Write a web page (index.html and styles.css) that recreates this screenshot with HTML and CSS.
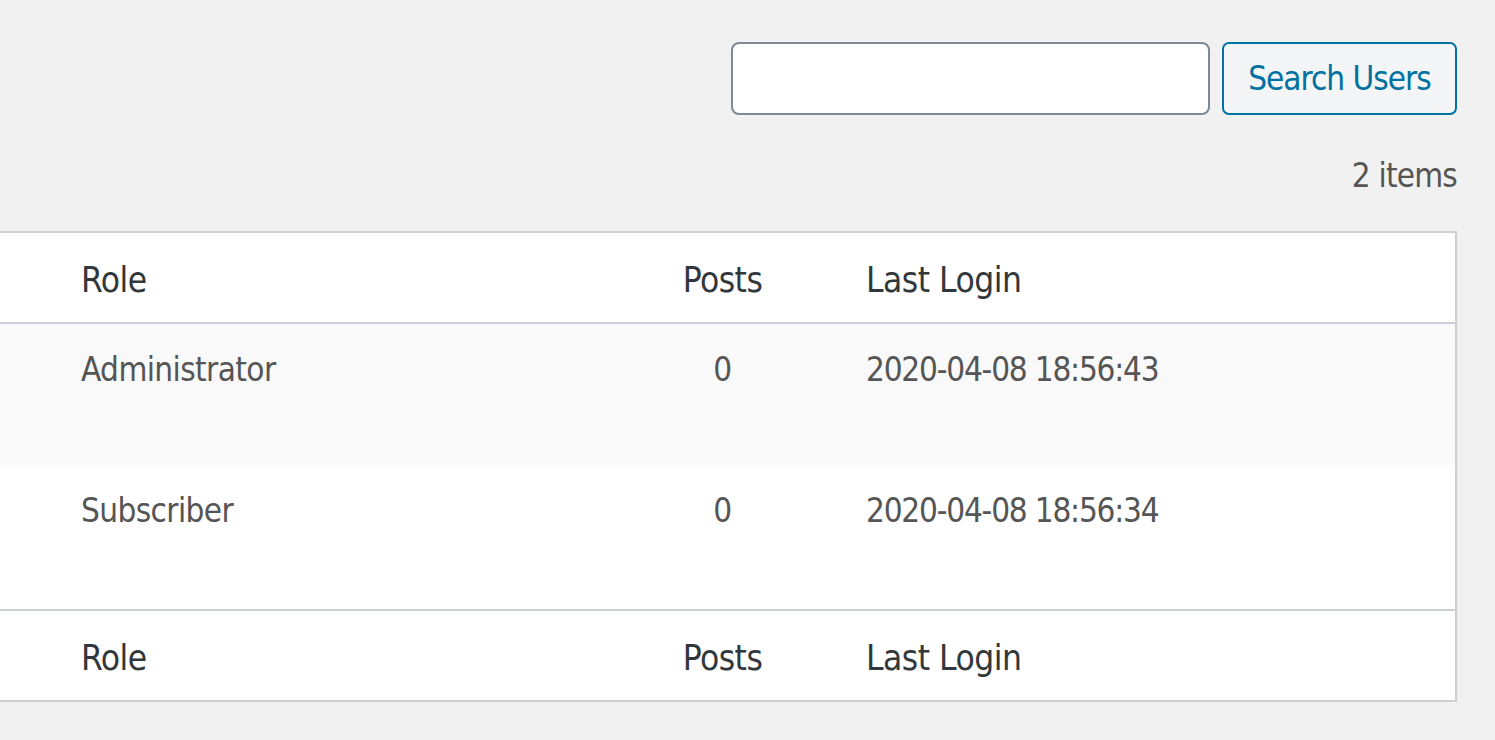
FILE: index.html
```html
<!DOCTYPE html>
<html lang="en">
<head>
<meta charset="utf-8">
<title>Users</title>
<link rel="stylesheet" href="styles.css">
</head>
<body>
<div class="wrap">
  <form class="search-box">
    <input class="search-input" type="search" aria-label="Search Users">
    <button class="button" type="button">Search Users</button>
  </form>
  <div class="tablenav">
    <span class="displaying-num">2 items</span>
  </div>
  <table class="users">
    <thead>
      <tr>
        <th class="col-role">Role</th>
        <th class="col-posts">Posts</th>
        <th class="col-login">Last Login</th>
      </tr>
    </thead>
    <tbody>
      <tr class="alt">
        <td class="col-role">Administrator</td>
        <td class="col-posts">0</td>
        <td class="col-login">2020-04-08 18:56:43</td>
      </tr>
      <tr class="second">
        <td class="col-role">Subscriber</td>
        <td class="col-posts">0</td>
        <td class="col-login">2020-04-08 18:56:34</td>
      </tr>
    </tbody>
    <tfoot>
      <tr>
        <th class="col-role">Role</th>
        <th class="col-posts">Posts</th>
        <th class="col-login">Last Login</th>
      </tr>
    </tfoot>
  </table>
</div>
</body>
</html>
```

FILE: styles.css
```css
html, body {
  margin: 0;
  padding: 0;
  background: #f1f1f1;
}

body {
  font-family: "DejaVu Sans Condensed", "DejaVu Sans", sans-serif;
  color: #444;
}

.wrap {
  padding: 42px 38px 0 0;
}

.search-box {
  display: flex;
  justify-content: flex-end;
  gap: 12px;
  margin: 0;
}

.search-input {
  box-sizing: border-box;
  width: 479px;
  height: 73px;
  border: 2px solid #7e8993;
  border-radius: 8px;
  background: #fff;
  margin: 0;
  padding: 0 16px;
  font: inherit;
  font-size: 33px;
}

.button {
  box-sizing: border-box;
  width: 235px;
  height: 73px;
  padding: 0;
  margin: 0;
  border: 2px solid #0071a1;
  border-radius: 7px;
  background: #f3f5f6;
  color: #0071a1;
  font-family: inherit;
  font-size: 33px;
  letter-spacing: -1px;
  line-height: 1;
  cursor: pointer;
}

.tablenav {
  display: flex;
  justify-content: flex-end;
  margin-top: 34px;
  height: 54px;
  margin-bottom: 28px;
}

.displaying-num {
  font-size: 33px;
  letter-spacing: -0.8px;
  line-height: 54px;
  color: #555;
}

.users {
  width: 1457px;
  border-collapse: collapse;
  background: #fff;
  border-top: 2px solid #ccd0d4;
  border-right: 2px solid #ccd0d4;
  border-bottom: 2px solid #ccd0d4;
  box-shadow: 0 2px 2px rgba(0, 0, 0, 0.05);
}

.users th {
  font-weight: 400;
  font-size: 35px;
  letter-spacing: -0.5px;
  line-height: 48px;
  color: #32373c;
  text-align: left;
  padding: 23px 0 18px 20px;
  height: 48px;
}

.users thead th {
  border-bottom: 2px solid #ccd0d4;
}

.users tfoot th {
  border-top: 2px solid #ccd0d4;
}

.users td {
  font-size: 33px;
  letter-spacing: -0.6px;
  line-height: 54px;
  color: #555;
  vertical-align: top;
  padding: 19px 0 0 20px;
  box-sizing: border-box;
}

.users td.col-login {
  letter-spacing: -1.2px;
}

.users tr.alt td {
  background: #f9f9f9;
  height: 142px;
}

.users tr.second td {
  height: 145px;
}

.users .col-role {
  width: 599px;
  padding-left: 81px;
  box-sizing: border-box;
}

.users .col-posts {
  width: 247px;
  padding-left: 0;
  text-align: center;
  box-sizing: border-box;
}

.users .col-login {
  padding-left: 20px;
}
```
